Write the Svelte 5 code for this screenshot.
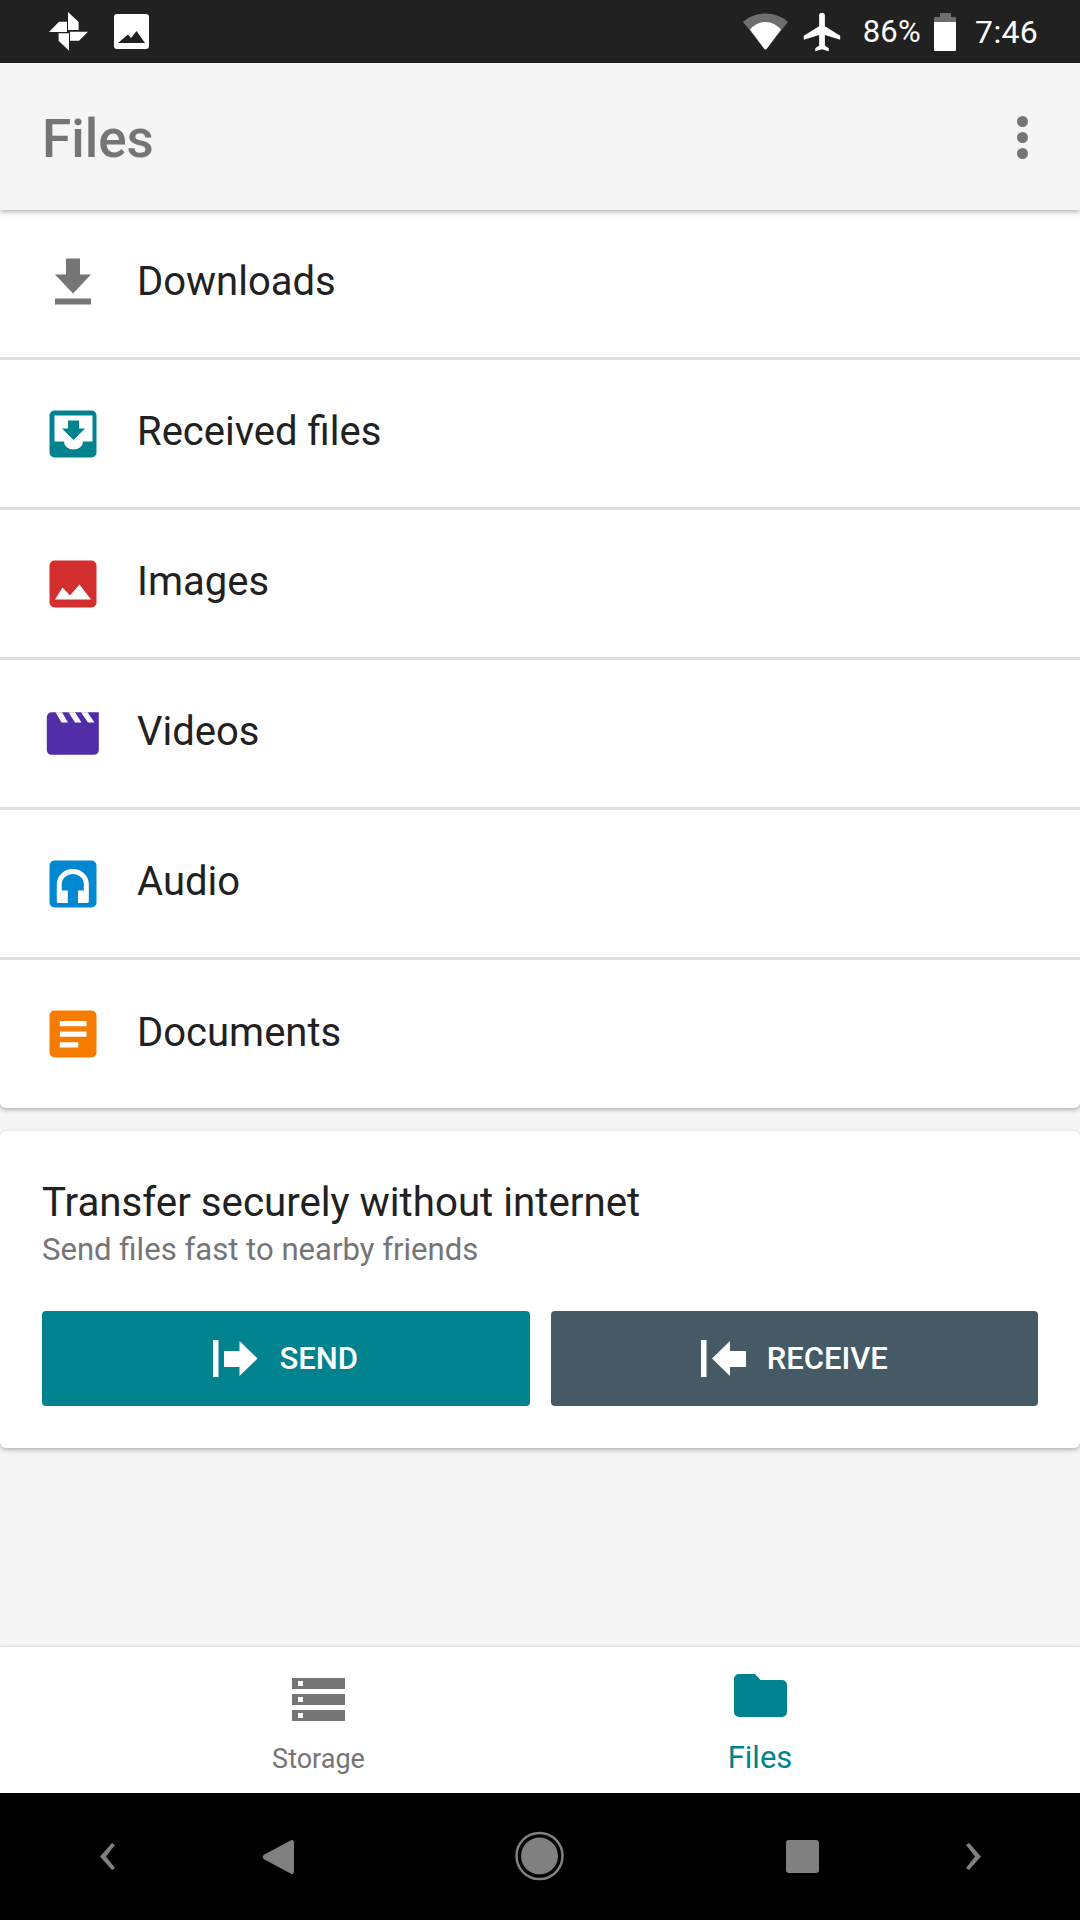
<script>
  const rows = ['Downloads', 'Received files', 'Images', 'Videos', 'Audio', 'Documents'];
</script>

<div class="screen">
  <header class="status">
    <div class="status-left">
      <svg class="pin" viewBox="0 0 39 39" aria-hidden="true">
        <path d="M19 0l10.600 10v8H19z M39 19.700H21v9h9z M20 38.700L9.600 28.700v-7.400H20z M0 20L10 9.700h8V20z" fill="#fff"/>
      </svg>
      <svg class="pic" viewBox="0 0 35 35" aria-hidden="true">
        <path fill-rule="evenodd" fill="#fff" d="M3 0h29a3 3 0 0 1 3 3v29a3 3 0 0 1-3 3H3a3 3 0 0 1-3-3V3a3 3 0 0 1 3-3zM4 29h27l-8.500-12-5.500 7-3-3.500z"/>
      </svg>
    </div>
    <div class="status-right">
      <svg class="wifi" viewBox="0 0 45 37" aria-hidden="true">
        <path d="M0 9C6 3.500 14 .5 22.500.5S39 3.500 45 9L22.500 37z" fill="#6e6e6e"/>
        <path d="M7 16.500C11 12 16.500 9 22.500 9S34 12 38 16.500L24 35.500a2 2 0 0 1-3 0z" fill="#fff"/>
      </svg>
      <svg class="plane" viewBox="0 0 24 24" aria-hidden="true">
        <path d="M21 16v-2l-8-5V3.500a1.500 1.500 0 0 0-3 0V9l-8 5v2l8-2.500V19l-2 1.500V22l3.500-1 3.500 1v-1.500L13 19v-5.500z" fill="#fff" transform="translate(0.500 0)"/>
      </svg>
      <span class="pct">86%</span>
      <div class="battery"><i></i><b></b></div>
      <span class="time">7:46</span>
    </div>
  </header>

  <div class="appbar">
    <h1>Files</h1>
    <div class="more"><i></i><i></i><i></i></div>
  </div>

  <main>
    <section class="list">
      {#each rows as r, i}
        <div class="row">
          <svg class="ico" viewBox="0 0 72 72" aria-hidden="true">
            {#if i === 0}
              <path d="M29 10.500h14v16h11L36 45.500 18 26.500h11z M18 50.500h36v6H18z" fill="#757575"/>
            {:else if i === 1}
              <rect x="12.500" y="12.500" width="47" height="47" rx="5" fill="#00838f"/>
              <path d="M17.500 17.500h38v26H46a9.500 8 0 0 1-19 0h-9.500z" fill="#fff"/>
              <path d="M31 22.500h11v8h6L36.500 42 25 30.500h6z" fill="#00838f"/>
            {:else if i === 2}
              <rect x="12.500" y="12.500" width="47" height="47" rx="5" fill="#d32f2f"/>
              <path d="M18 51.500L25.500 39.500 33 47.500 42.500 36.500 54 51.500z" fill="#fff"/>
            {:else if i === 3}
              <path d="M9.800 19.200a5 5 0 0 1 5-5H61.800V52a4.800 4.800 0 0 1-4.800 4.800H14.600a4.800 4.800 0 0 1-4.800-4.800z" fill="#512da8"/>
              <path d="M18.500 14.200H25l6 10.300h-6.500z M31.500 14.200H38l6.500 10.300H38z M44 14.200h6.500l7 10.300H51z" fill="#fff"/>
            {:else if i === 4}
              <rect x="12.500" y="12.500" width="47" height="47" rx="5" fill="#0288d1"/>
              <path d="M19.800 53.500V36a16 15 0 0 1 32 0v17.500a1.500 1.500 0 0 1-1.500 1.500H41V42.500h5.800V36a11 10 0 0 0-22 0v6.500h6V55H21.300a1.500 1.500 0 0 1-1.500-1.500z" fill="#fff"/>
            {:else}
              <rect x="12.500" y="12.500" width="47" height="47" rx="5" fill="#f57c00"/>
              <path d="M22.800 23h26.700v5.300H22.800z M22.800 33.500h26.700v5.300H22.800z M22.800 44.200h18.500v5.300H22.800z" fill="#fff"/>
            {/if}
          </svg>
          <span>{r}</span>
        </div>
      {/each}
    </section>

    <section class="card">
      <h2>Transfer securely without internet</h2>
      <p>Send files fast to nearby friends</p>
      <div class="actions">
        <button class="send">
          <svg viewBox="0 0 45 37" aria-hidden="true">
            <path d="M0 0h5.500v37H0z M11 11h15.500V1l18 17.500-18 17.500V27H11z" fill="#fff"/>
          </svg>
          SEND
        </button>
        <button class="receive">
          <svg viewBox="0 0 45 37" aria-hidden="true">
            <path d="M0 0h5.500v37H0z M45 11H29V1L11 18.500 29 36V27h16z" fill="#fff"/>
          </svg>
          RECEIVE
        </button>
      </div>
    </section>
  </main>

  <nav class="tabs">
    <div class="tab">
      <svg class="t-store" viewBox="0 0 53 43" aria-hidden="true">
        <path fill-rule="evenodd" fill="#757575" d="M0 0h53v11H0z M6 3v5h5V3z M0 16h53v11H0z M6 19v5h5v-5z M0 32h53v11H0z M6 35v5h5v-5z"/>
      </svg>
      <span>Storage</span>
    </div>
    <div class="tab active">
      <svg class="t-folder" viewBox="0 0 53 43" aria-hidden="true">
        <path d="M5 0h16l5.500 6H48a5 5 0 0 1 5 5v27a5 5 0 0 1-5 5H5a5 5 0 0 1-5-5V5a5 5 0 0 1 5-5z" fill="#00838f"/>
      </svg>
      <span>Files</span>
    </div>
  </nav>

  <footer class="sysnav">
    <svg viewBox="0 0 1080 127" aria-hidden="true">
      <g fill="#808080">
        <path d="M112 50l3 2-9 11.500 9 11.500-3 2-12-13.500z"/>
        <path d="M294 49a2 2 0 0 0-3.400-1.400L263.500 62a3 3 0 0 0 0 4L290.600 80.400a2 2 0 0 0 3.400-1.400z"/>
        <circle cx="539.500" cy="63" r="18.500"/>
        <circle cx="539.500" cy="63" r="23" fill="none" stroke="#808080" stroke-width="2.500"/>
        <rect x="786" y="47" width="33" height="33" rx="3"/>
        <path d="M969 50l-3 2 9 11.500-9 11.500 3 2 12-13.500z"/>
      </g>
    </svg>
  </footer>
</div>

<style>
  :global(body) { margin: 0; background: #f5f5f5; }
  .screen {
    width: 1080px; height: 1920px; display: flex; flex-direction: column;
    background: #f5f5f5; font-family: Roboto, sans-serif; overflow: hidden;
  }
  .status {
    height: 63px; background: #212121; display: flex; justify-content: space-between;
    align-items: center; color: #fff; flex: none;
  }
  .status-left { display: flex; align-items: center; margin-left: 49px; gap: 26px; }
  .pin { width: 39px; height: 39px; display: block; }
  .pic { width: 35px; height: 35px; display: block; }
  .status-right { display: flex; align-items: center; margin-right: 42px; }
  .wifi { width: 45px; height: 37px; display: block; }
  .plane { width: 46px; height: 46px; display: block; margin-left: 11px; }
  .pct { font-size: 31px; margin-left: 18px; letter-spacing: 0.3px; }
  .time { font-size: 32px; margin-left: 19px; letter-spacing: 0.3px; }
  .battery { width: 22px; margin-left: 13px; display: flex; flex-direction: column; align-items: center; }
  .battery i { width: 11px; height: 4px; background: #6e6e6e; display: block; }
  .battery b { width: 22px; height: 34px; border-top: 5px solid #6e6e6e; background: #fff; box-sizing: border-box; border-radius: 1px; display: block; }

  .appbar {
    height: 147px; flex: none; display: flex; justify-content: space-between; align-items: center;
    padding: 0 52px 0 42px; background: #f5f5f5; box-shadow: 0 2px 5px rgba(0,0,0,.3);
    position: relative; box-sizing: border-box;
  }
  h1 { margin: 6px 0 0; font-size: 53px; font-weight: 500; color: #757575; line-height: 1; }
  .more { display: flex; flex-direction: column; gap: 5px; margin-top: 2px; }
  .more i { width: 11px; height: 11px; border-radius: 50%; background: #757575; display: block; }

  main { flex: 1; display: flex; flex-direction: column; gap: 23px; }
  .list, .card { background: #fff; border-radius: 0 0 6px 6px; box-shadow: 0 2px 4px rgba(0,0,0,.28); }
  .row {
    height: 150px; box-sizing: border-box; display: flex; align-items: center;
    padding-left: 37px; border-bottom: 3px solid #e0e0e0; font-size: 40px; color: #212121;
  }
  .row span { margin-top: -4px; }
  .row:last-child { border-bottom: none; height: 148px; }
  .ico { width: 72px; height: 72px; display: block; margin-right: 28px; flex: none; }

  .card { padding: 49px 42px 0; height: 317px; box-sizing: border-box; border-radius: 6px; }
  h2 { margin: 0; font-size: 40.250px; font-weight: 400; color: #212121; line-height: 46px; }
  p { margin: 5px 0 0; font-size: 31.100px; color: #757575; line-height: 38px; }
  .actions { display: flex; gap: 21px; margin-top: 42px; }
  button {
    flex: 1; height: 95px; border: 0; border-radius: 4px; color: #fff; font: 500 31px Roboto, sans-serif;
    display: flex; align-items: center; justify-content: center; gap: 21px; padding: 0;
  }
  button svg { width: 45px; height: 37px; display: block; }
  .send { background: #00838f; }
  .receive { background: #455a64; }

  .tabs {
    height: 146px; flex: none; background: #fff; display: flex; box-shadow: 0 -1px 3px rgba(0,0,0,.12);
    position: relative; padding: 0 99px 0 97px; box-sizing: border-box;
  }
  .tab { flex: 1; display: flex; flex-direction: column; align-items: center; color: #757575; font-size: 27px; padding-top: 31px; }
  .tab.active { color: #00838f; font-size: 31px; padding-top: 27px; }
  .tab svg { width: 53px; height: 43px; display: block; }
  .tab span { margin-top: 22px; margin-left: 1px; line-height: 32px; }
  .tab.active span { margin-top: 25px; margin-left: 0; }
  .sysnav { height: 127px; flex: none; background: #000; }
  .sysnav svg { width: 1080px; height: 127px; display: block; }
</style>
